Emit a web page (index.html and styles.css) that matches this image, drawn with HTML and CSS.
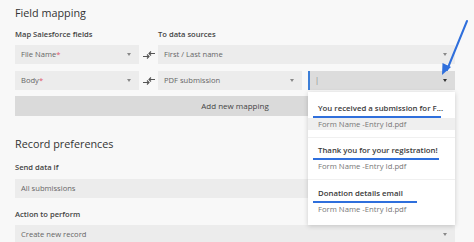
FILE: index.html
```html
<!DOCTYPE html>
<html lang="en">
<head>
    <meta charset="UTF-8">
    <title>Field mapping</title>
    <link rel="stylesheet" href="styles.css">
</head>
<body>
    <div class="panel">
        <h2 class="title">Field mapping</h2>

        <div class="map-head">
            <span class="label col-sf">Map Salesforce fields</span>
            <span class="label">To data sources</span>
        </div>

        <div class="map-row">
            <div class="select col-sf">File Name<span class="req">*</span><span class="caret"></span></div>
            <div class="swap">
                <svg width="12" height="8" viewBox="0 0 12 8">
                    <path d="M0 5.5h6M4 3.5l2 2-2 2M12 2.5H6M8 0.5l-2 2 2 2" fill="none" stroke="#555" stroke-width="1.1"/>
                </svg>
            </div>
            <div class="select grow">First / Last name<span class="caret"></span></div>
        </div>

        <div class="map-row">
            <div class="select col-sf">Body<span class="req">*</span><span class="caret"></span></div>
            <div class="swap">
                <svg width="12" height="8" viewBox="0 0 12 8">
                    <path d="M0 5.5h6M4 3.5l2 2-2 2M12 2.5H6M8 0.5l-2 2 2 2" fill="none" stroke="#555" stroke-width="1.1"/>
                </svg>
            </div>
            <div class="select col-src">PDF submission<span class="caret"></span></div>
            <div class="picker">
                <div class="select active"><span class="cursor">|</span><span class="caret dark"></span></div>
                <ul class="dropdown">
                    <li class="option">
                        <div class="opt-title"><span class="mark">You received a submission for F...</span></div>
                        <div class="opt-file hover">Form Name -Entry Id.pdf</div>
                    </li>
                    <li class="option">
                        <div class="opt-title"><span class="mark mid">Thank you for your registration!</span></div>
                        <div class="opt-file">Form Name -Entry Id.pdf</div>
                    </li>
                    <li class="option">
                        <div class="opt-title"><span class="mark short">Donation details email</span></div>
                        <div class="opt-file">Form Name -Entry Id.pdf</div>
                    </li>
                </ul>
            </div>
        </div>

        <div class="add-btn">Add new mapping</div>

        <h2 class="title sub">Record preferences</h2>

        <div class="label field-label">Send data if</div>
        <div class="select wide">All submissions<span class="caret"></span></div>

        <div class="label field-label">Action to perform</div>
        <div class="select wide">Create new record<span class="caret"></span></div>
    </div>

    <svg class="pointer" width="40" height="70" viewBox="0 0 40 70">
        <path d="M35 3L15 52" stroke="#2f6fdc" stroke-width="2" stroke-linecap="round"/>
        <path d="M10 57L10.5 45L19 49Z" fill="#2f6fdc"/>
    </svg>
</body>
</html>
```

FILE: styles.css
```css
body {
    margin: 0;
    width: 474px;
    height: 242px;
    overflow: hidden;
    background-color: #f8f8f8;
    font-family: "Open Sans", Arial, sans-serif;
    color: #444;
    position: relative;
}

.panel {
    padding: 4px 19px 0 15px;
}

.title {
    margin: 0;
    font-size: 10.8px;
    line-height: 18px;
    font-weight: 500;
    color: #333;
}

.title.sub {
    margin-top: 19px;
}

.label {
    font-size: 7.6px;
    line-height: 12px;
    font-weight: 600;
    color: #444;
}

.map-head {
    display: flex;
    margin-top: 6px;
}

.col-sf {
    width: 143px;
    flex: none;
}

.map-row {
    display: flex;
    align-items: center;
    margin-top: 5px;
}

.map-row + .map-row {
    margin-top: 7px;
}

.select {
    position: relative;
    height: 19px;
    line-height: 19px;
    padding-left: 6px;
    background-color: #ececec;
    font-size: 7.6px;
    color: #666;
    box-sizing: border-box;
}

.map-row .col-sf {
    width: 124px;
}

.req {
    color: #e0566a;
}

.caret {
    position: absolute;
    right: 8px;
    top: 8px;
    border-left: 2.5px solid transparent;
    border-right: 2.5px solid transparent;
    border-top: 3px solid #888;
}

.caret.dark {
    border-top-color: #333;
}

.swap {
    width: 19px;
    flex: none;
    display: flex;
    justify-content: center;
}

.grow {
    flex: 1;
}

.col-src {
    width: 144px;
    flex: none;
}

.picker {
    position: relative;
    flex: 1;
    margin-left: 6px;
}

.select.active {
    background-color: #dcdcdc;
    border-left: 2px solid #3d7fd8;
    padding-left: 5px;
    color: #555;
}

.cursor {
    font-weight: 300;
}

.dropdown {
    position: absolute;
    top: 21px;
    left: 0;
    right: 0;
    z-index: 2;
    margin: 0;
    padding: 5px 0 10px;
    list-style: none;
    background-color: #fff;
    box-shadow: 0 1px 5px rgba(0, 0, 0, 0.18);
}

.option {
    padding-top: 5.5px;
}

.option + .option {
    border-top: 1px solid #f0f0f0;
    margin-top: 7px;
    padding-top: 7.5px;
}

.opt-title {
    padding: 0 5px;
    font-size: 7.8px;
    line-height: 11px;
    font-weight: 600;
    color: #3a3a3a;
}

.mark {
    display: inline-block;
    box-sizing: border-box;
    padding: 0 5px 2px;
    border-bottom: 2px solid #2f6fdc;
    width: 128px;
    white-space: nowrap;
}

.mark.mid {
    width: 126px;
}

.mark.short {
    width: 104px;
}

.opt-file {
    padding: 0 10px;
    font-size: 7.7px;
    line-height: 12px;
    color: #777;
}

.opt-file.hover {
    background-color: #efefef;
}

.add-btn {
    margin-top: 6px;
    height: 20px;
    line-height: 20px;
    text-align: center;
    background-color: #dadada;
    font-size: 8px;
    color: #444;
    width: 440px;
}

.field-label {
    margin-top: 8px;
}

.wide {
    margin-top: 6px;
}

.wide + .field-label {
    margin-top: 10px;
}

.wide + .field-label + .wide {
    margin-top: 5px;
}

.pointer {
    position: absolute;
    left: 432px;
    top: 18px;
    z-index: 3;
}
```
